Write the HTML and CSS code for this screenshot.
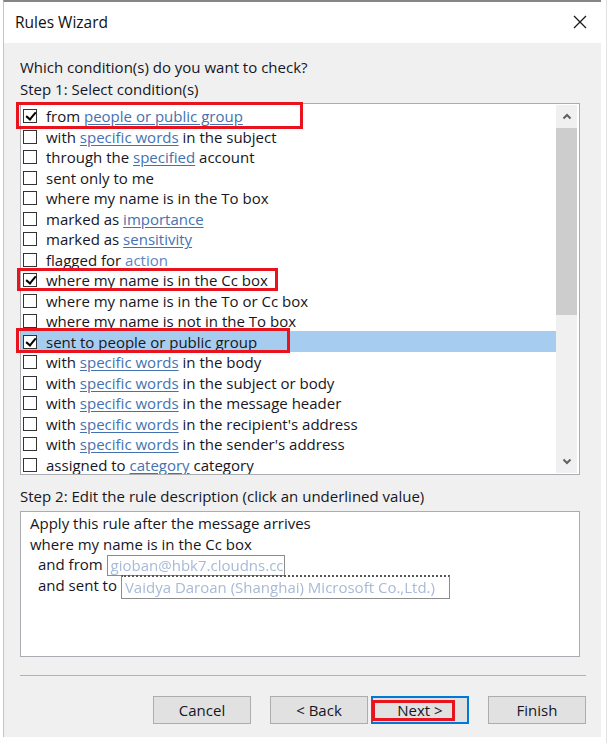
FILE: index.html
```html
<!DOCTYPE html>
<html lang="en">
<head>
    <meta charset="UTF-8">
    <title>Rules Wizard</title>
    <link rel="stylesheet" href="styles.css">
</head>
<body>
    <div class="screen">
        <div class="window">
            <div class="titlebar">
                <span class="title">Rules Wizard</span>
                <svg class="close" width="14" height="14" viewBox="0 0 14 14">
                    <path d="M1 1 L13 13 M13 1 L1 13" stroke="#1a1a1a" stroke-width="1.3" fill="none"/>
                </svg>
            </div>

            <div class="content">
                <div class="line">Which condition(s) do you want to check?</div>
                <div class="line">Step 1: Select condition(s)</div>

                <div class="list">
                    <div class="rows">
                        <div class="row"><span class="box checked"></span><span>from <a>people or public group</a></span></div>
                        <div class="row"><span class="box"></span><span>with <a>specific words</a> in the subject</span></div>
                        <div class="row"><span class="box"></span><span>through the <a>specified</a> account</span></div>
                        <div class="row"><span class="box"></span><span>sent only to me</span></div>
                        <div class="row"><span class="box"></span><span>where my name is in the To box</span></div>
                        <div class="row"><span class="box"></span><span>marked as <a>importance</a></span></div>
                        <div class="row"><span class="box"></span><span>marked as <a>sensitivity</a></span></div>
                        <div class="row"><span class="box"></span><span>flagged for <a class="plain">action</a></span></div>
                        <div class="row"><span class="box checked"></span><span>where my name is in the Cc box</span></div>
                        <div class="row"><span class="box"></span><span>where my name is in the To or Cc box</span></div>
                        <div class="row"><span class="box"></span><span>where my name is not in the To box</span></div>
                        <div class="row selected"><span class="box checked"></span><span>sent to <a>people or public group</a></span></div>
                        <div class="row"><span class="box"></span><span>with <a>specific words</a> in the body</span></div>
                        <div class="row"><span class="box"></span><span>with <a>specific words</a> in the subject or body</span></div>
                        <div class="row"><span class="box"></span><span>with <a>specific words</a> in the message header</span></div>
                        <div class="row"><span class="box"></span><span>with <a>specific words</a> in the recipient's address</span></div>
                        <div class="row"><span class="box"></span><span>with <a>specific words</a> in the sender's address</span></div>
                        <div class="row"><span class="box"></span><span>assigned to <a>category</a> category</span></div>
                    </div>
                    <div class="scrollbar">
                        <div class="arrow">
                            <svg width="10" height="7" viewBox="0 0 10 7"><path d="M1.5 5.5 L5 2 L8.5 5.5" stroke="#606060" stroke-width="2" fill="none"/></svg>
                        </div>
                        <div class="track"><div class="thumb"></div></div>
                        <div class="arrow">
                            <svg width="10" height="7" viewBox="0 0 10 7"><path d="M1.5 1.5 L5 5 L8.5 1.5" stroke="#606060" stroke-width="2" fill="none"/></svg>
                        </div>
                    </div>
                </div>

                <div class="line step2">Step 2: Edit the rule description (click an underlined value)</div>

                <div class="desc">
                    <div class="dline">Apply this rule after the message arrives</div>
                    <div class="dline">where my name is in the Cc box</div>
                    <div class="dline indent">and from <span class="value from">gioban@hbk7.cloudns.cc</span></div>
                    <div class="dline indent">and sent to <span class="value sent">Vaidya Daroan (Shanghai) Microsoft Co.,Ltd.)</span></div>
                </div>

                <div class="separator"></div>

                <div class="buttons">
                    <button class="btn">Cancel</button>
                    <button class="btn back">&lt; Back</button>
                    <button class="btn next">Next &gt;</button>
                    <button class="btn finish">Finish</button>
                </div>
            </div>
        </div>
        <div class="edge"></div>
    </div>

    <!-- red annotation boxes drawn over the dialog -->
    <div class="mark m1"></div>
    <div class="mark m2"></div>
    <div class="mark m3"></div>
    <div class="mark m4"></div>
</body>
</html>
```

FILE: styles.css
```css
html, body {
    margin: 0;
    background: #ffffff;
    font-family: "Open Sans", "Noto Sans", sans-serif;
    font-size: 15px;
    color: #161624;
}

.screen {
    display: flex;
}

.window {
    margin-left: 3px;
    width: 597px;
    height: 735px;
    border-top: 2px solid #858585;
    border-left: 1px solid #b9c6d8;
    display: flex;
    flex-direction: column;
}

.edge {
    margin-left: 5px;
    width: 1px;
    height: 743px;
    background: #e2e2e2;
}

.titlebar {
    height: 41px;
    background: #ffffff;
    display: flex;
    align-items: center;
    justify-content: space-between;
    padding: 0 14px 0 11px;
}

.title {
    font-size: 15.5px;
    color: #111;
    margin-top: -1px;
}

.close {
    margin-top: -2px;
}

.content {
    flex: 1;
    background: #f0f0f0;
    padding: 14px 0 0 16px;
}

.line {
    height: 21.5px;
    line-height: 21.5px;
    white-space: nowrap;
}

.list {
    margin-top: 3px;
    width: 560px;
    height: 372px;
    box-sizing: border-box;
    border: 1px solid #abadb3;
    background: #ffffff;
    display: flex;
}

.rows {
    flex: 1;
    padding-top: 1.75px;
    overflow: hidden;
}

.row {
    height: 20.5px;
    display: flex;
    align-items: center;
    white-space: nowrap;
    padding-left: 2px;
}

.row.selected {
    background: #a6cdf0;
}

.box {
    width: 14px;
    height: 14px;
    box-sizing: border-box;
    border: 1px solid #333;
    background: #fff;
    margin-right: 9px;
    flex: none;
    position: relative;
}

.box.checked::after {
    content: "";
    position: absolute;
    left: 4px;
    top: 0px;
    width: 4px;
    height: 8px;
    border-right: 2px solid #000;
    border-bottom: 2px solid #000;
    transform: rotate(40deg);
}

a {
    color: #4472b0;
    text-decoration: underline;
    text-underline-offset: 2px;
}

a.plain {
    text-decoration: none;
    color: #5a86bf;
}

.selected a {
    color: #161624;
}

.scrollbar {
    width: 21px;
    background: #f0f0f0;
    display: flex;
    flex-direction: column;
    margin: 1px 2px 1px 0;
}

.arrow {
    height: 23px;
    display: flex;
    align-items: center;
    justify-content: center;
}

.track {
    flex: 1;
}

.thumb {
    height: 187px;
    background: #cdcdcd;
}

.step2 {
    margin-top: 11px;
}

.desc {
    margin-top: 3.5px;
    width: 560px;
    height: 146px;
    box-sizing: border-box;
    border: 1px solid #abadb3;
    background: #ffffff;
    padding: 1px 0 0 9px;
}

.dline {
    height: 20.5px;
    line-height: 20.5px;
    white-space: nowrap;
}

.indent {
    padding-left: 8px;
}

.value {
    display: inline-block;
    box-sizing: border-box;
    border: 1px solid #8c8c8c;
    color: #a7bad6;
    vertical-align: middle;
    overflow: hidden;
    padding-left: 3px;
    filter: blur(0.5px);
}

.value.from {
    width: 178px;
    height: 21px;
    line-height: 18px;
    margin: -4px 0 -4px 0;
}

.value.sent {
    width: 329px;
    height: 24px;
    line-height: 20px;
    border-top: 2px dotted #555;
    margin: -2px 0 -4px 0;
}

.separator {
    margin-top: 18px;
    width: 566px;
    height: 1px;
    background: #b2b2b2;
}

.buttons {
    margin-top: 20px;
    width: 566px;
    display: flex;
    justify-content: flex-end;
}

.btn {
    width: 98px;
    height: 28px;
    box-sizing: border-box;
    border: 1px solid #adadad;
    background: #e1e1e1;
    font-family: "Open Sans", "Noto Sans", sans-serif;
    font-size: 15px;
    color: #161624;
    padding: 0;
    margin-left: 19px;
}

.btn.back {
    margin-left: 19px;
}

.btn.next {
    margin-left: 3px;
    border: 2px solid #0078d7;
}

.mark {
    position: absolute;
    box-sizing: border-box;
    border: 3px solid #e8131c;
}

.m1 {
    left: 16px;
    top: 102px;
    width: 287px;
    height: 27px;
}

.m2 {
    left: 17px;
    top: 268px;
    width: 261px;
    height: 23px;
}

.m3 {
    left: 16px;
    top: 328px;
    width: 274px;
    height: 25px;
}

.m4 {
    left: 372px;
    top: 700px;
    width: 83px;
    height: 21px;
}
```
